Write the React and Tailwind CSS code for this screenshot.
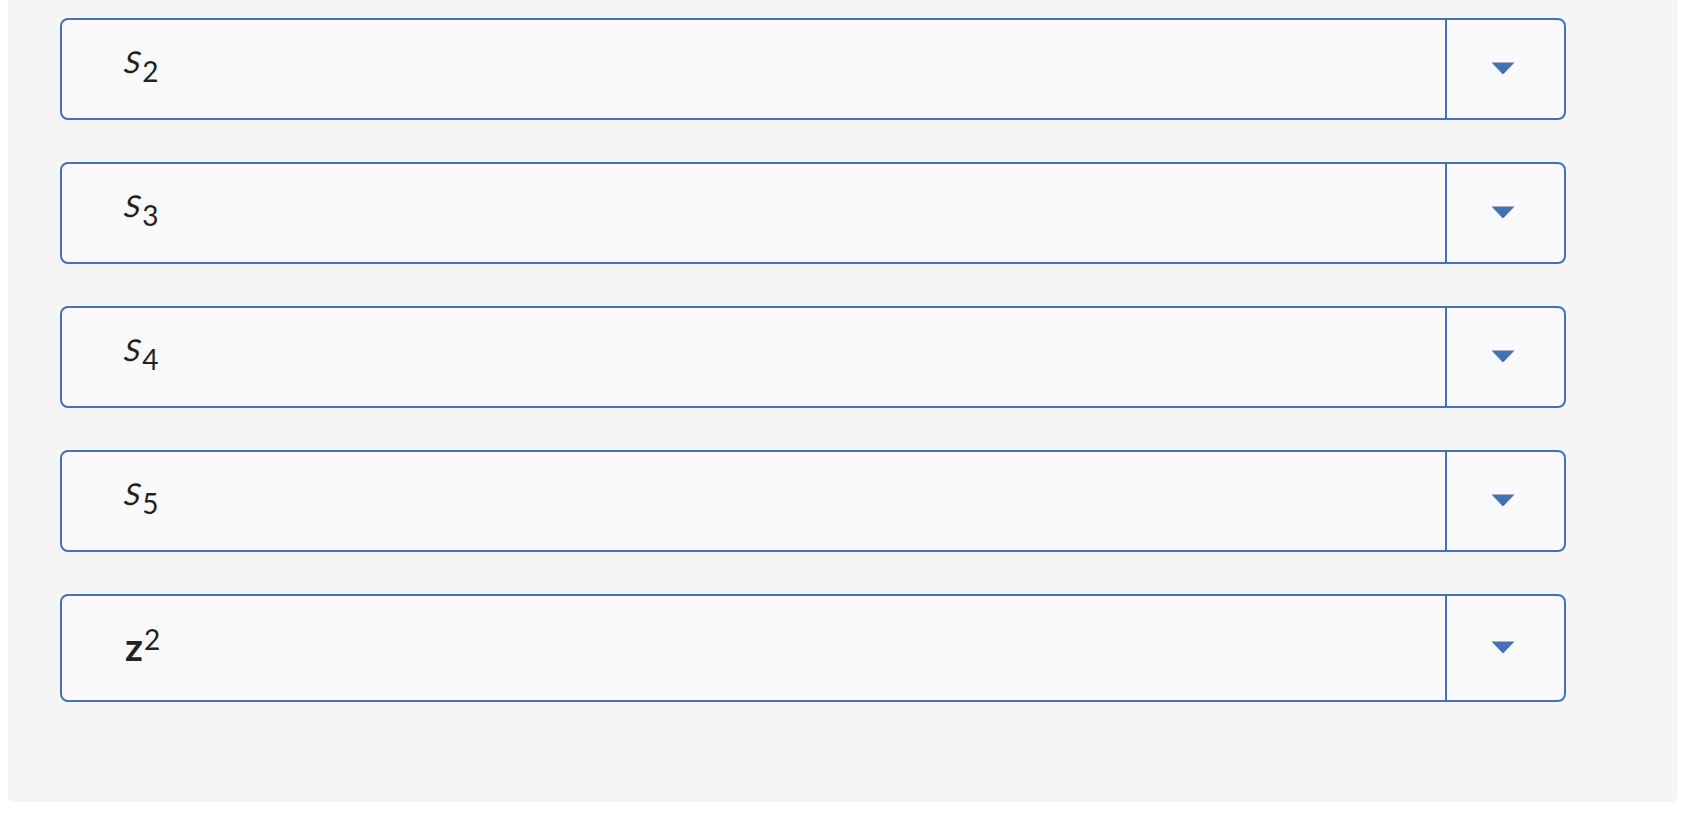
import React from 'react';

const rows = [
  { base: 'S', sub: '2' },
  { base: 'S', sub: '3' },
  { base: 'S', sub: '4' },
  { base: 'S', sub: '5' },
  { base: 'z', sup: '2' },
];

const Caret = () => (
  <svg width="24" height="13" viewBox="0 0 24 13" className="block">
    <path d="M0.5 0.5 H23.5 L13 11.6 Q12 12.6 11 11.6 Z" fill="#4272b5" />
  </svg>
);

const SelectRow = ({ row, tall }) => (
  <div
    className={`flex w-[1506px] ${tall ? 'h-[108px]' : 'h-[102px]'} rounded-[8px] border-2 border-[#4272b5] bg-[#fafafa]`}
  >
    <div
      className={`flex flex-1 items-center pl-[63px] text-[#222222] font-['Lato',sans-serif] ${row.sup ? 'pb-[4px]' : 'pb-[17px]'}`}
    >
      {row.sup ? (
        <span className="flex items-baseline leading-none">
          <span className="text-[39px] font-bold">{row.base}</span>
          <span className="relative -top-[11px] ml-[1px] text-[28px]">{row.sup}</span>
        </span>
      ) : (
        <span className="flex items-baseline leading-none">
          <span className="inline-block -skew-x-[13deg] text-[30px]">{row.base}</span>
          <span className="relative top-[9px] ml-[1px] text-[28px]">{row.sub}</span>
        </span>
      )}
    </div>
    <div className="flex w-[119px] items-center justify-center border-l-2 border-[#4272b5] pb-[2px] pr-[6px]">
      <Caret />
    </div>
  </div>
);

export default function App() {
  return (
    <div className="min-h-screen bg-white">
      <div className="ml-[8px] w-[1670px] rounded-b-[6px] bg-[#f5f5f5] pl-[52px] pt-[18px] pb-[100px]">
        <div className="flex flex-col gap-[42px]">
          {rows.map((row, i) => (
            <SelectRow key={i} row={row} tall={i === rows.length - 1} />
          ))}
        </div>
      </div>
    </div>
  );
}
